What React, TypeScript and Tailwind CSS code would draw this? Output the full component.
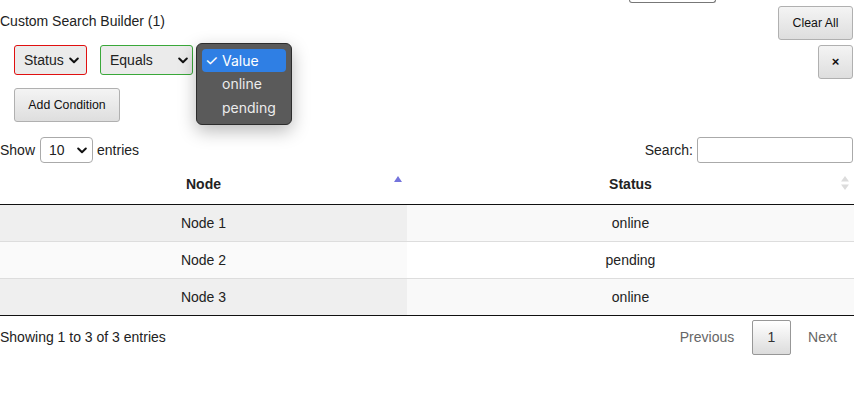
import React from "react";

function Chevron({ className = "" }: { className?: string }) {
  return (
    <svg width="10" height="7" viewBox="0 0 10 7" className={className}>
      <polyline points="1.2,1.5 5,5.2 8.8,1.5" fill="none" stroke="#111" strokeWidth="2" strokeLinecap="round" strokeLinejoin="round" />
    </svg>
  );
}

function SortAsc() {
  return (
    <svg width="8" height="6" viewBox="0 0 8 6" className="shrink-0">
      <polygon points="4,0 8,6 0,6" fill="#7474dc" />
    </svg>
  );
}

function SortBoth() {
  return (
    <svg width="8" height="14" viewBox="0 0 8 14" className="shrink-0">
      <polygon points="4,0 8,5.5 0,5.5" fill="#dcdcdc" />
      <polygon points="0,8.5 8,8.5 4,14" fill="#dcdcdc" />
    </svg>
  );
}

const rows = [
  { node: "Node 1", status: "online" },
  { node: "Node 2", status: "pending" },
  { node: "Node 3", status: "online" },
];

const btn =
  "border border-[#b0b0b0] rounded-[3px] bg-linear-to-b from-[#f4f4f4] to-[#dedede] text-[12.3px] text-[#111] flex items-center justify-center";

export default function App() {
  return (
    <div className="w-[854px] h-[403px] overflow-hidden bg-white text-[#222] text-[14px] font-['Liberation_Sans',Arial,sans-serif]">
      {/* bottom edge of a control scrolled above the view */}
      <div className="h-[3px]">
        <div className="ml-[629px] w-[87px] h-[3px] border border-t-0 border-[#777] rounded-b-[3px]" />
      </div>

      {/* search builder */}
      <div className="relative pt-[3px]">
        <div className="flex items-center justify-between h-[34px] pr-[1px]">
          <div className="pb-[4px]">Custom Search Builder (1)</div>
          <button className={`${btn} w-[75px] h-[34px]`}>Clear All</button>
        </div>

        <div className="flex items-start justify-between mt-[5px] pr-[1px] pl-[14px]">
          <div className="flex gap-[13px]">
            <div className="w-[73px] h-[30px] border border-[#e01010] rounded-[3px] bg-[#ebebeb] flex items-center justify-between pl-[9px] pr-[7px]">
              <span>Status</span>
              <Chevron />
            </div>
            <div className="w-[93px] h-[30px] border border-[#3aa83a] rounded-[3px] bg-[#ebebeb] flex items-center justify-between pl-[9px] pr-[4px]">
              <span>Equals</span>
              <Chevron />
            </div>
            <div className="w-[84px] h-[30px] border border-[#999] rounded-[3px] bg-[#ebebeb]" />
          </div>
          <button className={`${btn} w-[35px] h-[34px] text-[13px] font-bold`}>×</button>
        </div>

        <button className={`${btn} ml-[14px] mt-[9px] w-[106px] h-[34px]`}>Add Condition</button>

        {/* open value list */}
        <div className="absolute left-[196px] top-[40px] w-[96px] h-[82px] rounded-[6px] bg-[#5a5a5a] border border-[#2c2c2c] shadow-[0_6px_18px_rgba(0,0,0,0.28)] p-[5px] font-['Inter','Noto_Sans',sans-serif] text-[14px] text-[#ececec]">
          <div className="h-[23px] rounded-[4px] bg-[#2f7fe4] text-white flex items-center pl-[3px]">
            <span className="w-[17px] text-[15px] leading-none">✓</span>
            <span>Value</span>
          </div>
          <div className="h-[23.5px] flex items-center pl-[20px]">online</div>
          <div className="h-[23.5px] flex items-center pl-[20px]">pending</div>
        </div>
      </div>

      {/* length + filter */}
      <div className="flex items-center justify-between mt-[15px] pr-[1px] h-[26px]">
        <div className="flex items-center">
          <span>Show</span>
          <div className="ml-[5px] w-[53px] h-[26px] border border-[#aaa] rounded-[4px] bg-white flex items-center justify-between pl-[8px] pr-[5px]">
            <span>10</span>
            <Chevron />
          </div>
          <span className="ml-[4px]">entries</span>
        </div>
        <div className="flex items-center">
          <span>Search:</span>
          <div className="ml-[4px] w-[156px] h-[26px] border border-[#aaa] rounded-[3px] bg-white" />
        </div>
      </div>

      {/* table */}
      <div className="mt-[1px]">
        <div className="flex h-[41px] border-b border-[#111] font-bold">
          <div className="relative w-[407px] flex items-center justify-center">
            Node
            <div className="absolute left-[394px] top-[12px]"><SortAsc /></div>
          </div>
          <div className="relative flex-1 flex items-center justify-center">
            Status
            <div className="absolute left-[434px] top-[12px]"><SortBoth /></div>
          </div>
        </div>
        {rows.map((r, i) => {
          const odd = i % 2 === 0;
          return (
            <div key={r.node} className={`flex ${i > 0 ? "h-[37px] border-t border-[#ddd]" : "h-[36px]"}`}>
              <div className={`w-[407px] flex items-center justify-center ${odd ? "bg-[#efefef]" : "bg-[#fafafa]"}`}>{r.node}</div>
              <div className={`flex-1 flex items-center justify-center ${odd ? "bg-[#f9f9f9]" : "bg-white"}`}>{r.status}</div>
            </div>
          );
        })}
        <div className="border-t border-[#111]" />
      </div>

      {/* info + paging */}
      <div className="flex items-center justify-between mt-[4px] h-[35px]">
        <span>Showing 1 to 3 of 3 entries</span>
        <div className="flex items-center">
          <span className="w-[86px] text-center text-[#666]">Previous</span>
          <div className="ml-[2px] w-[39px] h-[35px] border border-[#979797] rounded-[2px] bg-linear-to-b from-white to-[#dcdcdc] flex items-center justify-center text-[#333]">1</div>
          <span className="w-[63px] text-center text-[#666]">Next</span>
        </div>
      </div>
    </div>
  );
}
